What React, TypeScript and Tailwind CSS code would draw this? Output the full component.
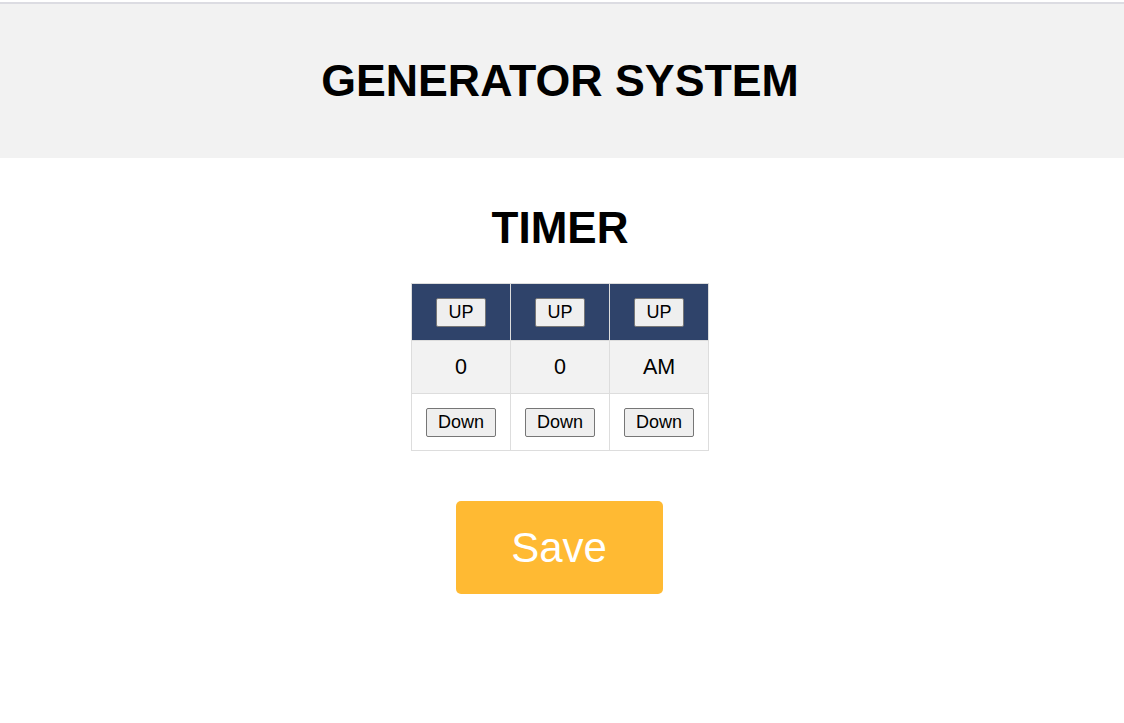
import { useState } from 'react'

const HOURS = 12

// Small native-looking button used in the timer grid
function StepButton({ label, onClick }: { label: string; onClick: () => void }) {
  return (
    <button
      type="button"
      onClick={onClick}
      className="h-[29px] rounded-[2px] border border-[#767676] bg-[#efefef] px-[11px] text-[18px] leading-[21px] text-black hover:bg-[#e5e5e5]"
    >
      {label}
    </button>
  )
}

export default function App() {
  const [hour, setHour] = useState(0)
  const [minute, setMinute] = useState(0)
  const [isAm, setIsAm] = useState(true)

  const columns = [
    {
      value: String(hour),
      up: () => setHour((h) => (h + 1) % HOURS),
      down: () => setHour((h) => (h + HOURS - 1) % HOURS),
    },
    {
      value: String(minute),
      up: () => setMinute((m) => (m + 1) % 60),
      down: () => setMinute((m) => (m + 59) % 60),
    },
    {
      value: isAm ? 'AM' : 'PM',
      up: () => setIsAm((a) => !a),
      down: () => setIsAm((a) => !a),
    },
  ]

  return (
    <div className="min-h-[723px] bg-white pt-[2px] font-['Liberation_Sans',Arial,sans-serif] text-black">
      {/* Header */}
      <header className="flex h-[156px] items-center justify-center border-t-2 border-[#dcdce2] bg-[#f2f2f2] pr-1">
        <h1 className="text-[44.7px] font-bold leading-[50px]">GENERATOR SYSTEM</h1>
      </header>

      <main className="flex flex-col items-center pr-1">
        <h2 className="mt-[45px] text-[44px] font-bold leading-[49px]">TIMER</h2>

        {/* Timer grid */}
        <div className="mt-[31px] grid grid-cols-[99px_99px_99px] border-l border-t border-[#dddddd]">
          {columns.map((col, i) => (
            <div
              key={`up-${i}`}
              className="flex h-[57px] items-center justify-center border-b border-r border-[#dddddd] bg-[#2f436a]"
            >
              <StepButton label="UP" onClick={col.up} />
            </div>
          ))}
          {columns.map((col, i) => (
            <div
              key={`val-${i}`}
              className="flex h-[53px] items-center justify-center border-b border-r border-[#dddddd] bg-[#f2f2f2] text-[21.5px]"
            >
              {col.value}
            </div>
          ))}
          {columns.map((col, i) => (
            <div
              key={`down-${i}`}
              className="flex h-[57px] items-center justify-center border-b border-r border-[#dddddd] bg-white"
            >
              <StepButton label="Down" onClick={col.down} />
            </div>
          ))}
        </div>

        <button
          type="button"
          className="mr-[2px] mt-[50px] flex h-[93px] w-[207px] items-center justify-center rounded-[5px] bg-[#ffba33] text-[42px] text-white hover:bg-[#f5b02a]"
        >
          Save
        </button>
      </main>
    </div>
  )
}
